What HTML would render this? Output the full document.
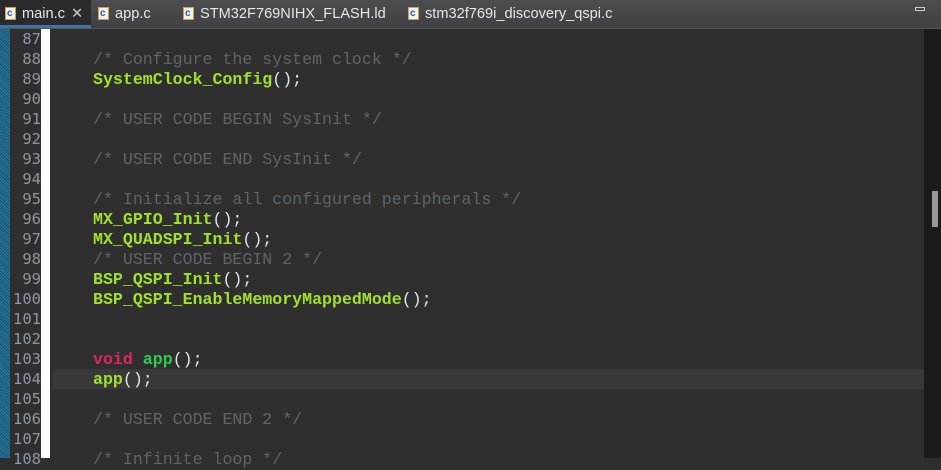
<!DOCTYPE html>
<html><head><meta charset="utf-8"><style>
*{margin:0;padding:0;box-sizing:border-box}
body{width:941px;height:458px;overflow:hidden;background:#2f2f2f;position:relative;font-family:"Liberation Sans",sans-serif}
.tabs{position:absolute;left:0;top:0;width:941px;height:29px;background:linear-gradient(#4b4d51,#404145);border-bottom:1px solid #55575b}
.tab{position:absolute;top:0;height:28px;color:#e6e6e6;font-size:14.6px;line-height:28px;white-space:nowrap}
.act{left:0;width:91px;background:#2b2b2b;border-bottom:3px solid #3d74a6}
.ic{display:inline-block;width:11px;height:13px;background:#f1f1f1;border:1px solid #c9a24a;vertical-align:-2px;margin-right:6px;position:relative}
.ic:after{content:"c";position:absolute;left:1px;top:-8px;font-size:10px;color:#2b5fa8;font-weight:bold}
.gut1{position:absolute;left:0;top:29px;width:10px;height:429px;background:repeating-linear-gradient(45deg,#185673 0 1px,#2a7796 1px 2px)}
.gut2{position:absolute;left:10px;top:29px;width:31px;height:429px;background:#2f2f2f}
.white{position:absolute;left:41px;top:29px;width:9px;height:429px;background:#fff}
.sb{position:absolute;left:924px;top:29px;width:17px;height:429px;background:#1b1b1b}
.thumb{position:absolute;left:932px;top:191px;width:6px;height:36px;background:#999}
.cur{position:absolute;left:53px;top:369px;width:871px;height:20px;background:#393939}
.ln{position:absolute;left:8px;width:33px;text-align:right;color:#8b97a3;font-family:"DejaVu Sans Mono",monospace;font-size:15.5px;line-height:20px}
.code{position:absolute;left:93px;font-family:"Liberation Mono",monospace;font-size:16.6px;line-height:20px;white-space:pre;color:#ddd}
.c{color:#5f6468}.f{color:#a0e22a;font-weight:bold}.k{color:#e0245c;font-weight:bold}.g{color:#2ecc4e;font-weight:bold}.p{color:#dfe6ea}
</style></head><body>
<div class="tabs">
<div class="tab act" style="padding-left:5px"><span class="ic"></span>main.c <span style="color:#ccc;margin-left:2px">✕</span></div>
<div class="tab" style="left:98px"><span class="ic"></span>app.c</div>
<div class="tab" style="left:183px"><span class="ic"></span>STM32F769NIHX_FLASH.ld</div>
<div class="tab" style="left:408px"><span class="ic"></span>stm32f769i_discovery_qspi.c</div>
<div style="position:absolute;left:915px;top:7px;width:10px;height:4px;border:1px solid #ccc"></div>
</div>
<div class="gut1"></div><div class="gut2"></div><div class="white"></div>
<div class="cur"></div>
<div class="sb"></div><div class="thumb"></div>
<div class="ln" style="top:29px">87<br>88<br>89<br>90<br>91<br>92<br>93<br>94<br>95<br>96<br>97<br>98<br>99<br>100<br>101<br>102<br>103<br>104<br>105<br>106<br>107<br>108</div>
<div class="code" style="top:30px">
<span class="c">/* Configure the system clock */</span>
<span class="f">SystemClock_Config</span><span class="p">();</span>

<span class="c">/* USER CODE BEGIN SysInit */</span>

<span class="c">/* USER CODE END SysInit */</span>

<span class="c">/* Initialize all configured peripherals */</span>
<span class="f">MX_GPIO_Init</span><span class="p">();</span>
<span class="f">MX_QUADSPI_Init</span><span class="p">();</span>
<span class="c">/* USER CODE BEGIN 2 */</span>
<span class="f">BSP_QSPI_Init</span><span class="p">();</span>
<span class="f">BSP_QSPI_EnableMemoryMappedMode</span><span class="p">();</span>


<span class="k">void</span> <span class="g">app</span><span class="p">();</span>
<span class="f">app</span><span class="p">();</span>

<span class="c">/* USER CODE END 2 */</span>

<span class="c">/* Infinite loop */</span></div>
</body></html>
